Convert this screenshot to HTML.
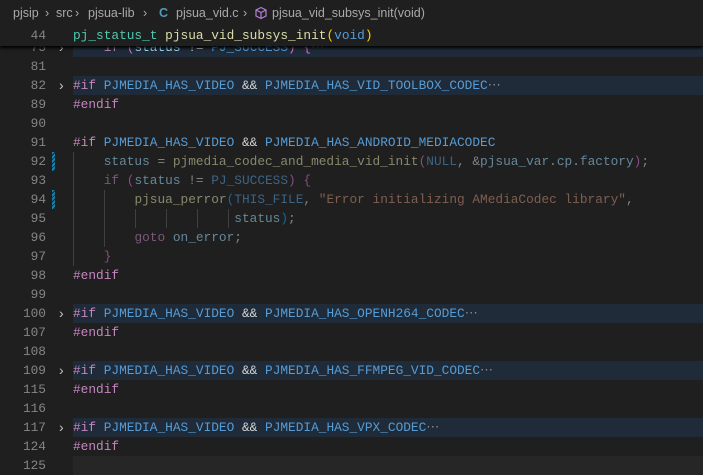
<!DOCTYPE html>
<html><head><meta charset="utf-8"><style>
body{margin:0;width:703px;height:464px;overflow:hidden;background:#1f1f1f;font-family:"Liberation Mono",monospace;}
.bc{position:absolute;left:0;top:0;width:703px;height:26px;background:#1f1f1f;font-family:"Liberation Sans",sans-serif;font-size:12.5px;color:#a9a9a9;line-height:26px;z-index:5;white-space:nowrap}
.bc span{position:absolute;top:0}
.r{position:absolute;left:0;width:703px;height:19px;line-height:19px;font-size:12.8px;white-space:pre;color:#d4d4d4}
.n{position:absolute;right:657px;color:#858585;text-align:right}
.c{position:absolute;left:73px}
.f{background:#1f2b38;left:73px;width:630px;position:absolute;top:0;height:19px}
.ar{position:absolute;left:59px;top:0;color:#c5c5c5;font-family:"Liberation Sans",sans-serif;font-size:14px}
.k{color:#c586c0}.m{color:#569cd6}.v{color:#9cdcfe}.fn{color:#dcdcaa}.s{color:#ce9178}.t{color:#4ec9b0}.y{color:#ffd700}.p{color:#da70d6}.b{color:#179fff}
.dots{color:#8c8c8c}
.dim .c{opacity:.55}
.g{position:absolute;width:1px;background:#404040}
.mod{position:absolute;left:52px;width:3px;height:19px;background:repeating-linear-gradient(135deg,#1b81a8 0 2px,#1f1f1f 2px 3px)}
.sticky{position:absolute;left:0;top:26px;width:703px;height:20px;background:#1f1f1f;z-index:4;box-shadow:0 2px 3px #000}
</style></head><body>
<div class="bc">
<span style="left:13px">pjsip</span><span style="left:45px">›</span>
<span style="left:56px">src</span><span style="left:75px">›</span>
<span style="left:88px">pjsua-lib</span><span style="left:143px">›</span>
<span style="left:159px;color:#519aba;font-weight:bold">C</span>
<span style="left:176px">pjsua_vid.c</span><span style="left:243px">›</span>
<span style="left:254px;top:6px;height:14px;line-height:0"><svg width="14" height="14" viewBox="0 0 14 14"><path d="M7 1.5L12 4v6L7 12.5 2 10V4z M2 4l5 2.5L12 4 M7 6.5v6" fill="none" stroke="#b180d7" stroke-width="1.2"/></svg></span>
<span style="left:272px">pjsua_vid_subsys_init(void)</span>
</div>
<div class="sticky"><div class="r" style="top:0"><span class="n">44</span><span class="c"><span class="t">pj_status_t</span> <span class="fn">pjsua_vid_subsys_init</span><span class="y">(</span><span class="m">void</span><span class="y">)</span></span></div></div>

<div class="r" style="top:38px"><div class="f"></div><span class="n">75</span><span class="ar">›</span><span class="c">    <span class="k">if</span> <span class="p">(</span><span class="v">status</span> != <span class="m">PJ_SUCCESS</span><span class="p">)</span> <span class="p">{</span><span class="dots">⋯</span></span></div>
<div class="r" style="top:57px"><span class="n">81</span></div>
<div class="r" style="top:76px"><div class="f"></div><span class="n">82</span><span class="ar">›</span><span class="c"><span class="k">#if</span> <span class="m">PJMEDIA_HAS_VIDEO</span> &amp;&amp; <span class="m">PJMEDIA_HAS_VID_TOOLBOX_CODEC</span><span class="dots">⋯</span></span></div>
<div class="r" style="top:95px"><span class="n">89</span><span class="c"><span class="k">#endif</span></span></div>
<div class="r" style="top:114px"><span class="n">90</span></div>
<div class="r" style="top:133px"><span class="n">91</span><span class="c"><span class="k">#if</span> <span class="m">PJMEDIA_HAS_VIDEO</span> &amp;&amp; <span class="m">PJMEDIA_HAS_ANDROID_MEDIACODEC</span></span></div>
<div class="mod" style="top:152px"></div><div class="mod" style="top:190px"></div>
<div class="g" style="left:73px;top:152px;height:114px"></div>
<div class="g" style="left:104px;top:190px;height:57px"></div>
<div class="g" style="left:135px;top:209px;height:19px"></div>
<div class="g" style="left:166px;top:209px;height:19px"></div>
<div class="g" style="left:197px;top:209px;height:19px"></div>
<div class="g" style="left:228px;top:209px;height:19px"></div>
<div class="dim">
<div class="r" style="top:152px"><span class="n">92</span><span class="c">    <span class="v">status</span> = <span class="fn">pjmedia_codec_and_media_vid_init</span><span class="p">(</span><span class="m">NULL</span>, &amp;<span class="v">pjsua_var</span>.<span class="v">cp</span>.<span class="v">factory</span><span class="p">)</span>;</span></div>
<div class="r" style="top:171px"><span class="n">93</span><span class="c">    <span class="k">if</span> <span class="p">(</span><span class="v">status</span> != <span class="m">PJ_SUCCESS</span><span class="p">)</span> <span class="p">{</span></span></div>
<div class="r" style="top:190px"><span class="n">94</span><span class="c">        <span class="fn">pjsua_perror</span><span class="b">(</span><span class="m">THIS_FILE</span>, <span class="s">"Error initializing AMediaCodec library"</span>,</span></div>
<div class="r" style="top:209px"><span class="n">95</span><span class="c">                     <span class="v">status</span><span class="b">)</span>;</span></div>
<div class="r" style="top:228px"><span class="n">96</span><span class="c">        <span class="k">goto</span> <span class="v">on_error</span>;</span></div>
<div class="r" style="top:247px"><span class="n">97</span><span class="c">    <span class="p">}</span></span></div>
</div>
<div class="r" style="top:266px"><span class="n">98</span><span class="c"><span class="k">#endif</span></span></div>
<div class="r" style="top:285px"><span class="n">99</span></div>
<div class="r" style="top:304px"><div class="f"></div><span class="n">100</span><span class="ar">›</span><span class="c"><span class="k">#if</span> <span class="m">PJMEDIA_HAS_VIDEO</span> &amp;&amp; <span class="m">PJMEDIA_HAS_OPENH264_CODEC</span><span class="dots">⋯</span></span></div>
<div class="r" style="top:323px"><span class="n">107</span><span class="c"><span class="k">#endif</span></span></div>
<div class="r" style="top:342px"><span class="n">108</span></div>
<div class="r" style="top:361px"><div class="f"></div><span class="n">109</span><span class="ar">›</span><span class="c"><span class="k">#if</span> <span class="m">PJMEDIA_HAS_VIDEO</span> &amp;&amp; <span class="m">PJMEDIA_HAS_FFMPEG_VID_CODEC</span><span class="dots">⋯</span></span></div>
<div class="r" style="top:380px"><span class="n">115</span><span class="c"><span class="k">#endif</span></span></div>
<div class="r" style="top:399px"><span class="n">116</span></div>
<div class="r" style="top:418px"><div class="f"></div><span class="n">117</span><span class="ar">›</span><span class="c"><span class="k">#if</span> <span class="m">PJMEDIA_HAS_VIDEO</span> &amp;&amp; <span class="m">PJMEDIA_HAS_VPX_CODEC</span><span class="dots">⋯</span></span></div>
<div class="r" style="top:437px"><span class="n">124</span><span class="c"><span class="k">#endif</span></span></div>
<div class="r" style="top:456px"><div class="f" style="background:#262626"></div><span class="n">125</span></div>
</body></html>
